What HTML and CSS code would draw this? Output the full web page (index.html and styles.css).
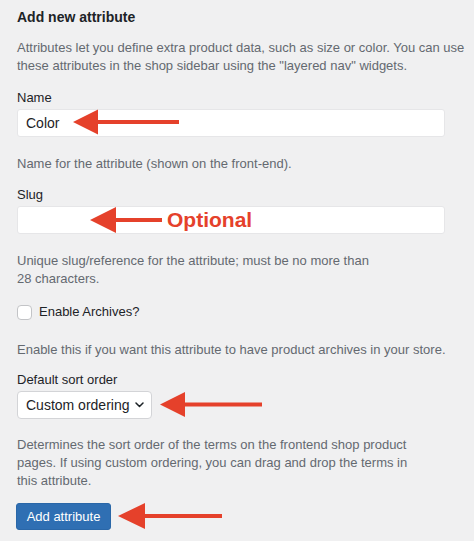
FILE: index.html
```html
<!DOCTYPE html>
<html lang="en">
<head>
<meta charset="utf-8">
<title>Add new attribute</title>
<link rel="stylesheet" href="styles.css">
</head>
<body>
<div class="page">
  <h2 class="title">Add new attribute</h2>
  <p class="intro">Attributes let you define extra product data, such as size or color. You can use<br>these attributes in the shop sidebar using the "layered nav" widgets.</p>

  <label class="field-label first">Name</label>
  <div class="text-input">Color</div>
  <p class="desc">Name for the attribute (shown on the front-end).</p>

  <label class="field-label">Slug</label>
  <div class="text-input"></div>
  <p class="desc">Unique slug/reference for the attribute; must be no more than<br>28 characters.</p>

  <div class="check-row">
    <span class="checkbox"></span>
    <span>Enable Archives?</span>
  </div>
  <p class="desc desc-archives">Enable this if you want this attribute to have product archives in your store.</p>

  <label class="field-label sort-label">Default sort order</label>
  <div class="select">
    <span>Custom ordering</span>
    <svg class="chevron" width="9" height="6" viewBox="0 0 9 6"><path d="M1 1 L4.5 4.5 L8 1" fill="none" stroke="#1d2327" stroke-width="1.5" stroke-linecap="round" stroke-linejoin="round"/></svg>
  </div>
  <p class="desc desc-sort">Determines the sort order of the terms on the frontend shop product<br>pages. If using custom ordering, you can drag and drop the terms in<br>this attribute.</p>

  <button class="primary-btn" type="button">Add attribute</button>

  <div class="annotations">
    <svg class="arrows" width="474" height="541" viewBox="0 0 474 541">
      <path d="M73 122 L98 109.5 L98 120 L179 120 L179 124 L98 124 L98 134.5 Z" />
      <path d="M90 220 L116 207 L116 218 L162 218 L162 222 L116 222 L116 233 Z" />
      <path d="M160 404.5 L185 392 L185 402.5 L262 402.5 L262 406.5 L185 406.5 L185 417 Z" />
      <path d="M118 516 L145 503 L145 514 L222 514 L222 518 L145 518 L145 529 Z" />
    </svg>
    <span class="optional">Optional</span>
  </div>
</div>
</body>
</html>
```

FILE: styles.css
```css
html, body {
  margin: 0;
  padding: 0;
}

body {
  background: #f0f0f1;
  font-family: "Liberation Sans", Arial, sans-serif;
  font-size: 13px;
  line-height: 18px;
  color: #1d2327;
}

.page {
  position: relative;
  width: 474px;
  height: 541px;
  box-sizing: border-box;
  padding: 8px 0 0 17px;
  overflow: hidden;
}

.title {
  margin: 0;
  font-size: 14px;
  line-height: 18px;
  font-weight: 700;
  color: #1d2327;
}

.intro {
  margin: 12.5px 0 0;
  color: #646970;
  white-space: nowrap;
}

.field-label {
  display: block;
  margin-top: 13.5px;
}

.field-label.first {
  margin-top: 14px;
}

.text-input {
  box-sizing: border-box;
  width: 428px;
  height: 28px;
  margin-top: 2px;
  padding: 0 8px;
  background: #ffffff;
  border: 1px solid #e6e6e8;
  border-radius: 3px;
  font-size: 14px;
  line-height: 26px;
  color: #1d2327;
}

.desc {
  margin: 16px 0 0;
  color: #646970;
  white-space: nowrap;
}

.text-input + .desc {
  margin-top: 18px;
}

.check-row {
  display: flex;
  align-items: center;
  gap: 7px;
  margin-top: 15px;
  height: 18px;
}

.checkbox {
  box-sizing: border-box;
  width: 15px;
  height: 15px;
  background: #ffffff;
  border: 1px solid #c3c4c7;
  border-radius: 4px;
}

.desc-archives {
  margin-top: 19.5px;
}

.sort-label {
  margin-top: 12.5px;
}

.select {
  box-sizing: border-box;
  display: inline-flex;
  align-items: center;
  gap: 5px;
  height: 28px;
  margin-top: 2px;
  padding: 0 7px 0 8px;
  background: #ffffff;
  border: 1px solid #d3d4d7;
  border-radius: 4px;
  font-size: 14px;
  white-space: nowrap;
}

.chevron {
  display: block;
}

.desc-sort {
  margin-top: 16.5px;
}

.primary-btn {
  display: block;
  box-sizing: border-box;
  width: 95px;
  height: 27px;
  margin: 13.5px 0 0 -1px;
  padding: 0;
  background: #2f6fb3;
  border: 1px solid #2a67a8;
  border-radius: 3px;
  color: #ffffff;
  font-family: "Liberation Sans", Arial, sans-serif;
  font-size: 13px;
  line-height: 25px;
}

.annotations {
  position: absolute;
  left: 0;
  top: 0;
  width: 474px;
  height: 541px;
  pointer-events: none;
}

.arrows {
  position: absolute;
  left: 0;
  top: 0;
}

.arrows path {
  fill: #e5412b;
}

.optional {
  position: absolute;
  left: 167px;
  top: 209px;
  font-size: 21px;
  line-height: 21px;
  font-weight: 700;
  color: #e5412b;
}
```
